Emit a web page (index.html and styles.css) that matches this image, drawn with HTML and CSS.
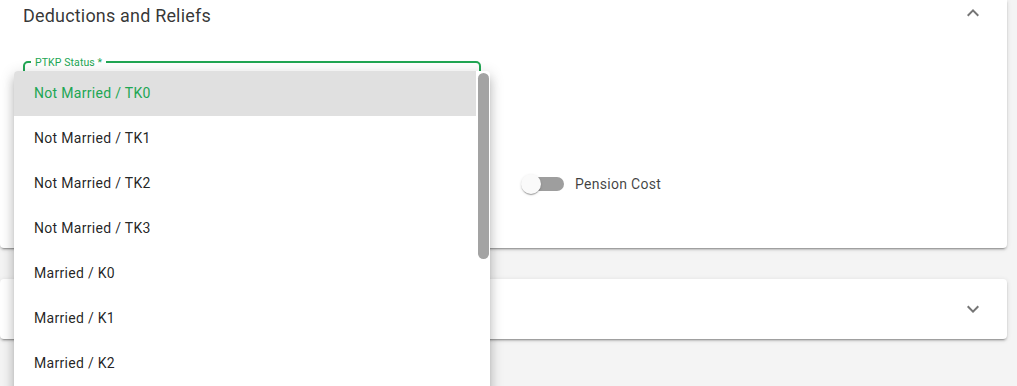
FILE: index.html
```html
<!DOCTYPE html>
<html>
<head>
<meta charset="utf-8">
<link rel="stylesheet" href="styles.css">
</head>
<body>
<div class="page">
  <section class="card card-open">
    <header class="card-header">
      <h2 class="card-title">Deductions and Reliefs</h2>
      <svg class="chev" viewBox="0 0 24 24" width="24" height="24"><path d="M12 8l-6 6 1.41 1.41L12 10.83l4.59 4.58L18 14z"/></svg>
    </header>
    <div class="card-body">
      <div class="field">
        <span class="field-label">PTKP Status *</span>
      </div>
      <div></div>
      <div></div>
      <div class="toggle-row">
        <span class="toggle"><span class="track"></span><span class="knob"></span></span>
        <span class="toggle-label">Pension Cost</span>
      </div>
    </div>
  </section>
  <section class="card card-closed">
    <svg class="chev" viewBox="0 0 24 24" width="24" height="24"><path d="M16.59 8.59L12 13.170 7.41 8.59 6 10l6 6 6-6z"/></svg>
  </section>

  <div class="menu">
    <ul class="menu-list">
      <li class="item active">Not Married / TK0</li>
      <li class="item">Not Married / TK1</li>
      <li class="item">Not Married / TK2</li>
      <li class="item">Not Married / TK3</li>
      <li class="item">Married / K0</li>
      <li class="item">Married / K1</li>
      <li class="item">Married / K2</li>
    </ul>
    <div class="scrollbar"><div class="thumb"></div></div>
  </div>
</div>
</body>
</html>
```

FILE: styles.css
```css
html, body {
  margin: 0;
  padding: 0;
  height: 100%;
  overflow: hidden;
  background: #f4f4f4;
  font-family: Roboto, "Liberation Sans", sans-serif;
}

.page {
  position: relative;
  padding-right: 10px;
  display: flex;
  flex-direction: column;
  gap: 31px;
}

.card {
  background: #fff;
  border-radius: 0 0 4px 4px;
  box-shadow: 0 3px 1px -2px rgba(0,0,0,.2), 0 2px 2px 0 rgba(0,0,0,.14), 0 1px 5px 0 rgba(0,0,0,.12);
}

.card-open {
  height: 248px;
  box-sizing: border-box;
}

.card-closed {
  height: 60px;
  border-radius: 4px;
  display: flex;
  justify-content: flex-end;
  align-items: flex-start;
  padding: 21px 22px 0 0;
  box-sizing: border-box;
}

.card-header {
  display: flex;
  justify-content: space-between;
  align-items: flex-start;
  padding: 4px 22px 0 23px;
  height: 28px;
  box-sizing: border-box;
}

.card-title {
  margin: 0;
  font-size: 18px;
  line-height: 24px;
  font-weight: 400;
  letter-spacing: 0.18px;
  color: rgba(0,0,0,.8);
}

.chev {
  fill: #757575;
  display: block;
  margin-top: -3px;
}

.card-body {
  display: grid;
  grid-template-columns: 458px 1fr;
  column-gap: 40px;
  row-gap: 38px;
  padding: 33px 23px 0 23px;
}

.field {
  position: relative;
  height: 56px;
  border: 2px solid #21a653;
  border-radius: 5px;
  box-sizing: border-box;
}

.field-label {
  position: absolute;
  top: -7px;
  left: 6px;
  padding: 0 4px;
  background: #fff;
  font-size: 10.5px;
  line-height: 14px;
  letter-spacing: 0.1px;
  color: #21a653;
}

.toggle-row {
  display: flex;
  align-items: center;
  gap: 11px;
  height: 56px;
  padding-top: 1px;
  box-sizing: border-box;
}

.toggle {
  position: relative;
  width: 43px;
  height: 20px;
  display: inline-block;
}

.track {
  position: absolute;
  left: 9px;
  top: 3px;
  width: 34px;
  height: 14px;
  border-radius: 7px;
  background: #9e9e9e;
}

.knob {
  position: absolute;
  left: 0;
  top: 0;
  width: 20px;
  height: 20px;
  border-radius: 50%;
  background: #fafafa;
  box-shadow: 0 2px 1px -1px rgba(0,0,0,.2), 0 1px 1px 0 rgba(0,0,0,.14), 0 1px 3px 0 rgba(0,0,0,.12);
}

.toggle-label {
  font-size: 14px;
  letter-spacing: 0.3px;
  color: rgba(0,0,0,.75);
}

.menu {
  position: absolute;
  top: 71px;
  left: 14px;
  width: 476px;
  height: 400px;
  background: #fff;
  border-radius: 4px;
  display: flex;
  box-shadow: 0 5px 5px -3px rgba(0,0,0,.2), 0 8px 10px 1px rgba(0,0,0,.14), 0 3px 14px 2px rgba(0,0,0,.12);
}

.menu-list {
  list-style: none;
  margin: 0;
  padding: 0;
  flex: 1;
}

.item {
  height: 45px;
  line-height: 45px;
  padding-left: 20px;
  font-size: 14px;
  letter-spacing: 0.3px;
  color: rgba(0,0,0,.87);
}

.item.active {
  background: #e0e0e0;
  color: #21a653;
  border-radius: 4px 0 0 0;
}

.scrollbar {
  width: 14px;
  padding: 2px 1px 0 2px;
  box-sizing: border-box;
}

.thumb {
  height: 186px;
  border-radius: 6px;
  background: #a3a3a3;
}
```
